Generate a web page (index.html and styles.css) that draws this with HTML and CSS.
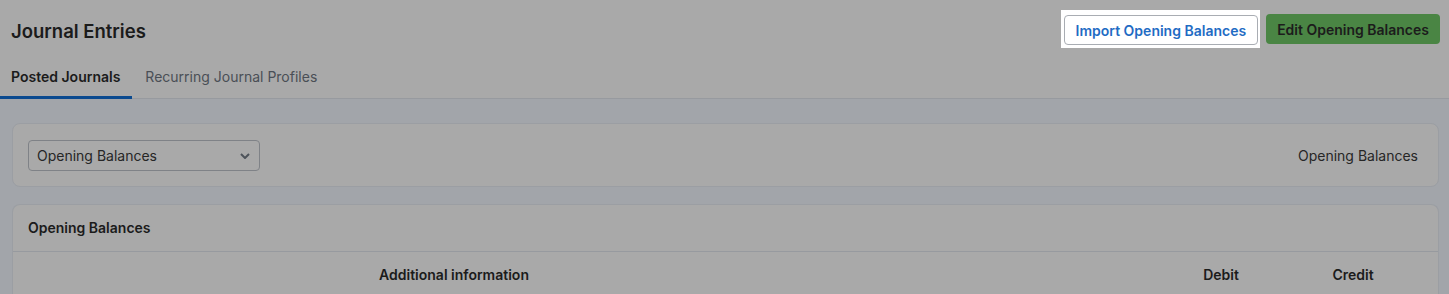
FILE: index.html
```html
<!DOCTYPE html>
<html lang="en">

<head>
    <meta charset="UTF-8">
    <title>Journal Entries</title>
    <link rel="stylesheet" href="styles.css">
</head>

<body>
    <div class="page-header">
        <h1 class="page-title">Journal Entries</h1>
        <div class="header-actions">
            <div class="spotlight">
                <button class="btn btn-outline">Import Opening Balances</button>
            </div>
            <button class="btn btn-green">Edit Opening Balances</button>
        </div>
    </div>

    <div class="tabs">
        <div class="tab active">Posted Journals</div>
        <div class="tab">Recurring Journal Profiles</div>
    </div>

    <div class="content">
        <div class="card filter-card">
            <div class="select">
                <span>Opening Balances</span>
                <svg width="10" height="6" viewBox="0 0 10 6">
                    <polyline points="1,1 5,5 9,1" fill="none" stroke="#4d535a" stroke-width="2" />
                </svg>
            </div>
            <span class="filter-label">Opening Balances</span>
        </div>

        <div class="card journal-card">
            <div class="card-title">Opening Balances</div>
            <div class="table-head">
                <div class="col-info">Additional information</div>
                <div></div>
                <div class="col-num">Debit</div>
                <div class="col-num">Credit</div>
            </div>
        </div>
    </div>
</body>

</html>
```

FILE: styles.css
```css
body {
    font-family: Inter, "Noto Sans", sans-serif;
    margin: 0;
    padding: 0;
    background-color: #a2a5aa;
    color: #1b1b1b;
    font-size: 14px;
}

.page-header {
    display: flex;
    justify-content: space-between;
    align-items: center;
    padding: 10px 9px 0 11px;
    background-color: #a9a9a9;
}

.page-title {
    margin: 0;
    font-size: 18.5px;
    font-weight: 600;
    padding-top: 4px;
}

.header-actions {
    display: flex;
    align-items: center;
}

.spotlight {
    background-color: #fff;
    padding: 5px 2px 3px 3px;
}

.btn {
    height: 30px;
    padding: 0 11px;
    font-family: inherit;
    font-size: 14px;
    font-weight: 600;
    border-radius: 4px;
    cursor: pointer;
}

.btn-outline {
    background-color: #fff;
    color: #1f6cc4;
    border: 1px solid #a9adb3;
}

.btn-green {
    margin-left: 6px;
    background-color: #4a8544;
    color: #1c1c1c;
    border: none;
}

.tabs {
    display: flex;
    padding-top: 10px;
    background-color: #a9a9a9;
    border-bottom: 1px solid #979a9f;
}

.tab {
    padding: 0 12px 0 11px;
    height: 38px;
    line-height: 38px;
    color: #4a4f56;
    border-bottom: 3px solid transparent;
    margin-bottom: -1px;
}

.tab.active {
    color: #1b1b1b;
    font-weight: 600;
    border-bottom-color: #0b4a8f;
}

.tab + .tab {
    padding-left: 13px;
}

.content {
    padding: 24px 10px 0 12px;
}

.card {
    background-color: #a9a9a9;
    border: 1px solid #9b9ea3;
    border-radius: 8px;
}

.filter-card {
    display: flex;
    justify-content: space-between;
    align-items: center;
    padding: 16px 20px 15px 15px;
}

.select {
    display: flex;
    justify-content: space-between;
    align-items: center;
    width: 213px;
    height: 29px;
    padding: 0 9px 0 8px;
    border: 1px solid #7f8287;
    border-radius: 4px;
    color: #262626;
}

.filter-label {
    color: #262626;
}

.journal-card {
    margin-top: 17px;
    border-bottom-left-radius: 0;
    border-bottom-right-radius: 0;
    border-bottom: none;
    height: 100px;
}

.card-title {
    height: 46px;
    line-height: 46px;
    padding-left: 15px;
    font-weight: 600;
    border-bottom: 1px solid #979a9f;
}

.table-head {
    display: grid;
    grid-template-columns: 852px 1fr 132px 132px;
    padding: 0 19px 0 15px;
    height: 44px;
    align-items: center;
    font-weight: 600;
}

.col-info,
.col-num {
    text-align: center;
}
```
